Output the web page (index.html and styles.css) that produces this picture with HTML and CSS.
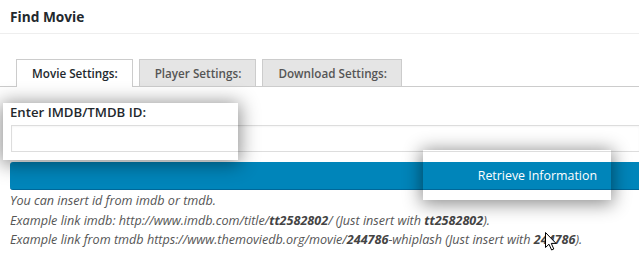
FILE: index.html
```html
<!DOCTYPE html>
<html>
<head>
<meta charset="utf-8">
<link rel="stylesheet" href="styles.css">
</head>
<body>
<div class="page">
  <h1 class="title">Find Movie</h1>
  <div class="tabs">
    <span class="tab active">Movie Settings:</span>
    <span class="tab">Player Settings:</span>
    <span class="tab">Download Settings:</span>
  </div>
  <div class="content">
    <label class="label">Enter IMDB/TMDB ID:</label>
    <div class="input"></div>
    <div class="button"><span>Retrieve Information</span></div>
    <div class="help">
      <p>You can insert id from imdb or tmdb.</p>
      <p>Example link imdb: http://www.imdb.com/title/<b>tt2582802</b>/ (Just insert with <b>tt2582802</b>).</p>
      <p>Example link from tmdb https://www.themoviedb.org/movie/<b>244786</b>-whiplash (Just insert with <b>244786</b>).</p>
    </div>
  </div>
  <div class="spot spot-field"></div>
  <div class="spot spot-button"></div>
  <svg class="cursor" width="12" height="19" viewBox="0 0 12 19">
    <path d="M0.5 0.5 L0.5 15.5 L4 12.2 L6.6 18 L8.8 17 L6.3 11.4 L11 11.4 Z" fill="#fff" stroke="#000" stroke-width="1" stroke-linejoin="round"/>
  </svg>
</div>
</body>
</html>
```
FILE: styles.css
```css
html, body {
  margin: 0;
  padding: 0;
  background: #fff;
  overflow: hidden;
}
body {
  font-family: "Open Sans", "Noto Sans", sans-serif;
  color: #23282d;
}
.page {
  position: relative;
  width: 639px;
  height: 258px;
  overflow: hidden;
}
.title {
  margin: 0;
  height: 34px;
  box-sizing: border-box;
  padding: 7px 10px 0;
  font-size: 13.7px;
  font-weight: 700;
  line-height: 20px;
  border-bottom: 1px solid #eeeeee;
}
.tabs {
  display: flex;
  gap: 6px;
  margin-top: 25px;
  padding-left: 16px;
  border-bottom: 1px solid #cccccc;
  height: 27px;
}
.tab {
  box-sizing: border-box;
  height: 27px;
  padding: 0 14px 0 15px;
  border: 1px solid #cccccc;
  border-bottom: none;
  background: #e5e5e5;
  color: #555555;
  font-size: 11.7px;
  font-weight: 600;
  line-height: 26px;
  white-space: nowrap;
}
.tab.active {
  background: #ffffff;
  color: #23282d;
  height: 28px;
}
.content {
  padding-left: 10px;
}
.label {
  display: block;
  padding-top: 15px;
  height: 23px;
  font-size: 13.2px;
  font-weight: 600;
  line-height: 20px;
  color: #23282d;
}
.input {
  margin-left: 1px;
  height: 27px;
  box-sizing: border-box;
  border: 1px solid #dddddd;
  border-right: none;
  background: #fff;
  box-shadow: inset 0 1px 2px rgba(0,0,0,0.04);
}
.button {
  margin-top: 10px;
  height: 28px;
  box-sizing: border-box;
  background: #0085ba;
  border-bottom: 1px solid #006799;
  border-radius: 3px 0 0 3px;
  display: flex;
  align-items: center;
  justify-content: flex-end;
  padding-right: 42px;
  color: #ffffff;
  font-size: 12.4px;
  line-height: 20px;
}
.help {
  font-size: 12.6px;
  font-style: italic;
  color: #555555;
  line-height: 19.5px;
  padding-top: 1px;
}
.help p {
  margin: 0;
  white-space: nowrap;
}
.help b {
  color: #444444;
  font-weight: 700;
}
.spot {
  position: absolute;
  box-shadow: 0 2px 18px 2px rgba(0, 0, 0, 0.45);
}
.spot-field {
  left: 3px;
  top: 103px;
  width: 235px;
  height: 57px;
}
.spot-button {
  left: 423px;
  top: 150px;
  width: 188px;
  height: 50px;
}
.cursor {
  position: absolute;
  left: 545px;
  top: 232px;
}
```
